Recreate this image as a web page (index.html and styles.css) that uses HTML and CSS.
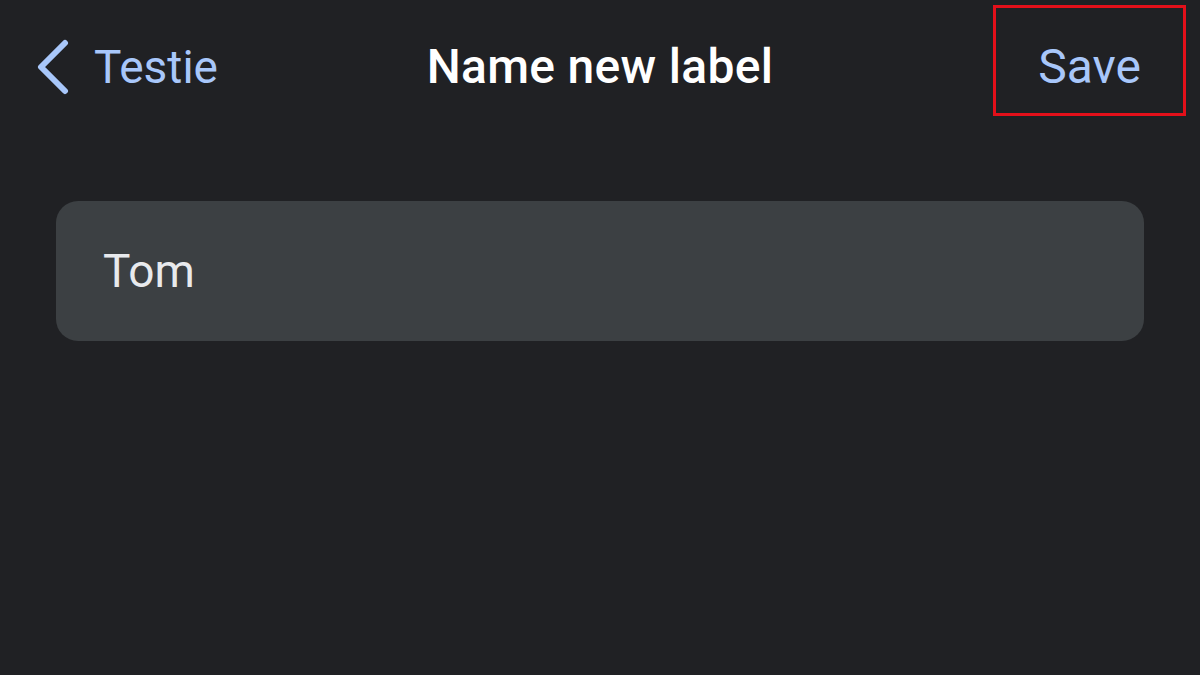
FILE: index.html
```html
<!DOCTYPE html>
<html lang="en">
<head>
  <meta charset="UTF-8">
  <meta name="viewport" content="width=device-width, initial-scale=1">
  <title>Name new label</title>
  <link rel="stylesheet" href="styles.css">
</head>
<body>

  <!-- Barra superior -->
  <header class="topbar">
    <a class="back" href="#">
      <svg class="chev" width="34" height="56" viewBox="0 0 34 56">
        <path d="M29 4 L5 28 L29 52" fill="none" stroke="currentColor" stroke-width="6" stroke-linecap="round" stroke-linejoin="round"/>
      </svg>
      <span>Testie</span>
    </a>
    <h1>Name new label</h1>
    <button class="save">Save</button>
  </header>

  <!-- Campo del nombre -->
  <main class="content">
    <div class="field">Tom</div>
  </main>

</body>
</html>
```

FILE: styles.css
```css
* { margin:0; padding:0; box-sizing:border-box; }
html, body { width:100%; height:100%; background:#202124; color:#e8eaed; font-family:Roboto, "Noto Sans", sans-serif; }

.topbar {
  display:grid;
  grid-template-columns:1fr auto 1fr;
  align-items:center;
  height:122px;
  padding:5px 14px 0;
}
.back {
  display:flex;
  align-items:center;
  gap:24px;
  color:#a8c7fa;
  text-decoration:none;
  font-size:46px;
  justify-self:start;
  margin:6px 0 0 22px;
}
.back .chev { display:block; }
h1 {
  font-size:48px;
  font-weight:500;
  letter-spacing:0.3px;
  color:#fff;
  margin-top:6px;
}
.save {
  justify-self:end;
  width:193px;
  height:111px;
  margin-top:-6px;
  background:none;
  border:3px solid #e3101a;
  color:#a8c7fa;
  font-family:inherit;
  font-size:48px;
  padding-top:11px;
}

.content { padding:79px 56px 0; }
.field {
  height:140px;
  border-radius:22px;
  background:#3c4043;
  display:flex;
  align-items:center;
  padding:0 47px;
  font-size:46px;
  color:#e8eaed;
}
```
